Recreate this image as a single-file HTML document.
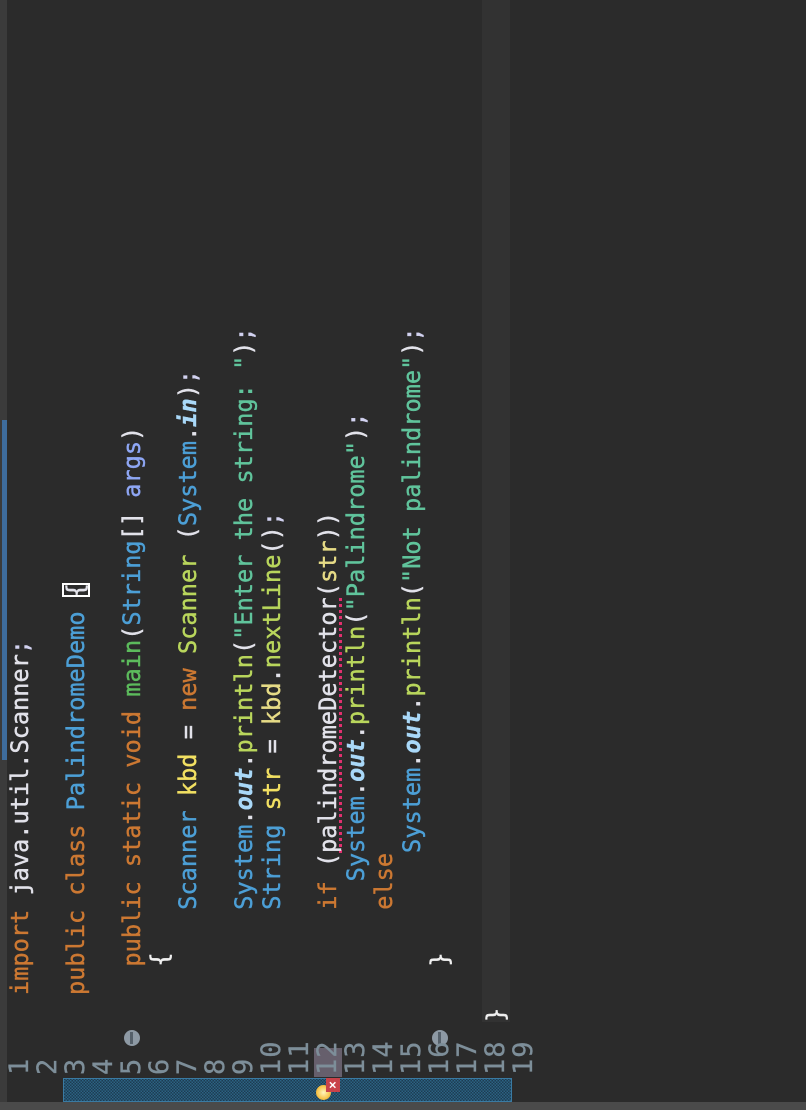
<!DOCTYPE html>
<html><head><meta charset="utf-8"><style>
html,body{margin:0;padding:0;background:#2b2b2b;width:806px;height:1110px;overflow:hidden}
#r{position:absolute;left:0;top:0;width:1110px;height:806px;background:#2b2b2b;transform-origin:0 0;transform:translate(0,1110px) rotate(-90deg)}
.a{position:absolute}
.ln{position:absolute;left:115px;height:28px;line-height:28px;font-family:"DejaVu Sans Mono",monospace;font-size:23.6px;white-space:pre;color:#e2e2ea;-webkit-text-stroke:0.4px currentColor}
.num{position:absolute;left:35px;height:28px;line-height:28px;font-family:"DejaVu Sans Mono",monospace;font-size:27px;letter-spacing:1px;color:#7d8e99;white-space:pre;-webkit-text-stroke:0.3px currentColor}
.k{color:#cc7832}.c{color:#4c9fd6}.m{color:#b9d65c}.g{color:#5cbb5c}.s{color:#60c49c}.v{color:#f2e062}.v2{color:#e6db86}.p{color:#8ea6f4}
.o{color:#a9d8f8;font-weight:bold;font-style:italic}.w{color:#f0f0f0}.sc{color:#d2d2f0}
.ul{background:repeating-linear-gradient(90deg,#e0306e 0 3px,transparent 3px 6px) 0 100%/100% 3px no-repeat}
</style></head><body>
<div id="r">
<div class="a" style="left:0;top:0;width:1110px;height:7px;background:#3b3b3b"></div>
<div class="a" style="left:350px;top:2px;width:340px;height:5px;background:#3e6c9c"></div>
<div class="a" style="left:0;top:0;width:8px;height:806px;background:#4a4a4a"></div>
<div class="a" style="left:8px;top:63px;width:24px;height:449px;box-sizing:border-box;border:1px solid #3a7aa2;background:repeating-conic-gradient(#2c6283 0 25%,#1d3c52 0 50%) 0 0/3px 3px"></div>
<div class="a" style="left:88px;top:482px;width:1022px;height:28px;background:#323232"></div>
<div class="a" style="left:33px;top:314px;width:29px;height:28px;background:#665f6c"></div>
<div class="a" style="left:64px;top:124px;width:16px;height:16px;border-radius:50%;background:#8d99a4"><div class="a" style="left:2px;top:6px;width:12px;height:3px;background:#55606a"></div></div>
<div class="a" style="left:64px;top:432px;width:16px;height:16px;border-radius:50%;background:#8d99a4"><div class="a" style="left:2px;top:6px;width:12px;height:3px;background:#55606a"></div></div>
<div class="a" style="left:10px;top:316px;width:15px;height:15px;border-radius:50%;background:radial-gradient(circle,#fff6c0 0,#f7c54a 60%,#d8902a 100%)"></div>
<div class="a" style="left:18px;top:326px;width:14px;height:14px;background:#c9424a;color:#fff;font:bold 13px/14px 'Liberation Sans',sans-serif;text-align:center">×</div>
<div class="num" style="top:6px">1</div><div class="num" style="top:34px">2</div><div class="num" style="top:62px">3</div><div class="num" style="top:90px">4</div><div class="num" style="top:118px">5</div><div class="num" style="top:146px">6</div><div class="num" style="top:174px">7</div><div class="num" style="top:202px">8</div><div class="num" style="top:230px">9</div><div class="num" style="top:258px">10</div><div class="num" style="top:286px">11</div><div class="num" style="top:314px">12</div><div class="num" style="top:342px">13</div><div class="num" style="top:370px">14</div><div class="num" style="top:398px">15</div><div class="num" style="top:426px">16</div><div class="num" style="top:454px">17</div><div class="num" style="top:482px">18</div><div class="num" style="top:510px">19</div>
<div class="ln" style="top:6px"><span class="k">import</span> java.util.Scanner<span class="sc">;</span></div>
<div class="ln" style="top:62px"><span class="k">public class</span> <span class="c">PalindromeDemo</span> <span style="outline:2px solid #fff;outline-offset:-2px">{</span></div>
<div class="ln" style="top:118px">  <span class="k">public static void</span> <span class="g">main</span>(<span class="c">String</span>[] <span class="p">args</span>)</div>
<div class="ln w" style="top:146px">  {</div>
<div class="ln" style="top:174px">      <span class="c">Scanner</span> <span class="v">kbd</span> = <span class="k">new</span> <span class="m">Scanner</span> (<span class="c">System</span>.<span class="o">in</span>)<span class="sc">;</span></div>
<div class="ln" style="top:230px">      <span class="c">System</span>.<span class="o">out</span>.<span class="m">println</span>(<span class="s">"Enter the string: "</span>)<span class="sc">;</span></div>
<div class="ln" style="top:258px">      <span class="c">String</span> <span class="v">str</span> = <span class="v2">kbd</span>.<span class="m">nextLine</span>()<span class="sc">;</span></div>
<div class="ln" style="top:314px">      <span class="k">if</span> (<span class="ul">palindromeDetector</span>(<span class="v2">str</span>))</div>
<div class="ln" style="top:342px">        <span class="c">System</span>.<span class="o">out</span>.<span class="m">println</span>(<span class="s">"Palindrome"</span>)<span class="sc">;</span></div>
<div class="ln" style="top:370px">      <span class="k">else</span></div>
<div class="ln" style="top:398px">          <span class="c">System</span>.<span class="o">out</span>.<span class="m">println</span>(<span class="s">"Not palindrome"</span>)<span class="sc">;</span></div>
<div class="ln w" style="top:426px">  }</div>
<div class="ln w" style="top:482px;left:88px">}</div>
</div>
</body></html>
